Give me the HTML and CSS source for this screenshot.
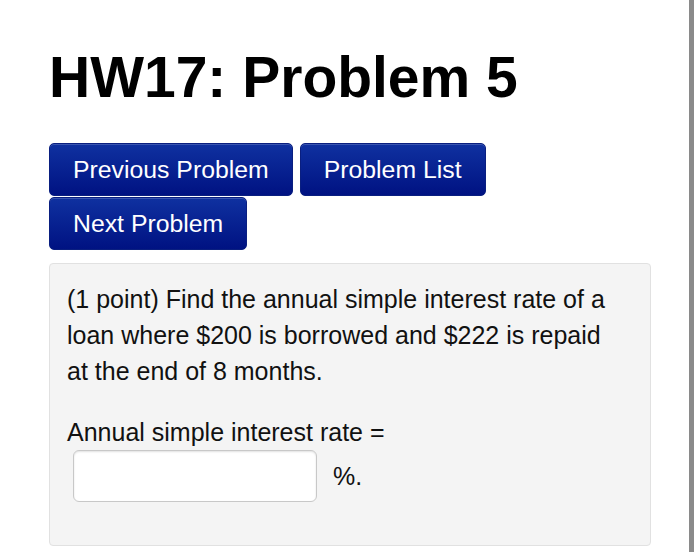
FILE: index.html
```html
<!DOCTYPE html>
<html>
<head>
<meta charset="utf-8">
<link rel="stylesheet" href="styles.css">
</head>
<body>
<div class="page">
  <div class="main">
    <h1 class="title">HW17: Problem 5</h1>
    <div class="nav">
      <a class="btn">Previous Problem</a>
      <a class="btn">Problem List</a>
      <a class="btn">Next Problem</a>
    </div>
    <div class="problem">
      <p class="question">(1 point) Find the annual simple interest rate of a loan where $200 is borrowed and $222 is repaid at the end of 8 months.</p>
      <p class="label">Annual simple interest rate =</p>
      <div class="answer-row">
        <input class="answer" type="text">
        <span class="unit">%.</span>
      </div>
    </div>
  </div>
  <div class="edge"></div>
</div>
</body>
</html>
```
FILE: styles.css
```css
html, body {
  margin: 0;
  padding: 0;
  background: #ffffff;
}
body {
  font-family: "Liberation Sans", Arial, Helvetica, sans-serif;
  color: #111;
}
.page {
  display: flex;
  height: 552px;
  overflow: hidden;
}
.main {
  width: 602px;
  padding: 43px 0 0 49px;
}
.edge {
  width: 5px;
  margin-left: 38px;
  background: #8a8a8a;
  height: 552px;
}
.title {
  margin: 0;
  font-size: 57px;
  line-height: 68px;
  font-weight: bold;
  color: #000;
}
.nav {
  margin-top: 32px;
  display: flex;
  flex-wrap: wrap;
  column-gap: 7px;
  row-gap: 1px;
}
.btn {
  display: block;
  font-size: 24.8px;
  line-height: 29px;
  padding: 11px 23px;
  color: #fff;
  border-radius: 5px;
  background: linear-gradient(#0f31a0, #001282);
  border: 1px solid #0a1f80;
  box-shadow: inset 0 1px 0 rgba(255,255,255,0.18);
}
.problem {
  margin-top: 13px;
  background: #f4f4f4;
  border: 1px solid #e1e1e1;
  border-radius: 4px;
  padding: 17px 30px 43px 17px;
  font-size: 25px;
  line-height: 36px;
  color: #111;
}
.question {
  margin: 0;
}
.label {
  margin: 25px 0 0 0;
}
.answer-row {
  display: flex;
  align-items: center;
}
.answer {
  box-sizing: border-box;
  width: 244px;
  height: 52px;
  margin: 0 0 0 6px;
  border: 1px solid #c8c8c8;
  border-radius: 6px;
  background: #fff;
  box-shadow: inset 0 1px 2px rgba(0,0,0,0.12);
}
.unit {
  margin-left: 16px;
}
```
